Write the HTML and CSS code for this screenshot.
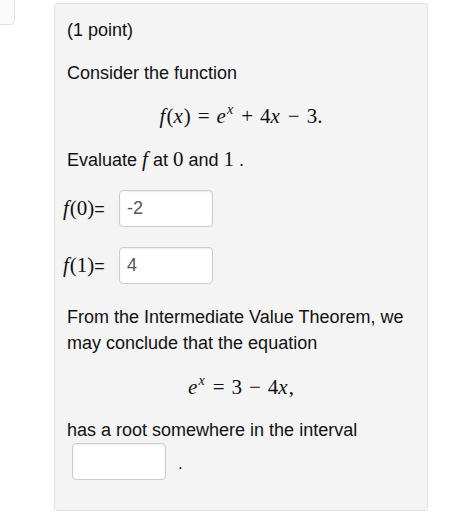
FILE: index.html
```html
<!DOCTYPE html>
<html lang='en'>
<head>
    <meta charset='UTF-8'>
    <title>Problem</title>
    <link rel="stylesheet" href="styles.css">
</head>
<body>
    <div class='page'>
        <div class='side-tab'></div>
        <div class='problem'>
            <p>(1 point)</p>
            <p>Consider the function</p>
            <div class='math-display'><i>f</i>(<i>x</i>)<span class='mo'>=</span><i>e</i><sup><i>x</i></sup><span class='mo'>+</span>4<i>x</i><span class='mo'>&minus;</span>3.</div>
            <p>Evaluate <i class='m'>f</i> at <span class='m'>0</span> and <span class='m'>1</span> .</p>
            <div class='answer-row'>
                <span class='label'><span class='m'><i>f</i>(0)</span>=</span>
                <input class='answer' type='text' value='-2'>
            </div>
            <div class='answer-row'>
                <span class='label'><span class='m'><i>f</i>(1)</span>=</span>
                <input class='answer' type='text' value='4'>
            </div>
            <p class='tight'>From the Intermediate Value Theorem, we may conclude that the equation</p>
            <div class='math-display'><i>e</i><sup><i>x</i></sup><span class='mo'>=</span>3<span class='mo'>&minus;</span>4<i>x</i>,</div>
            <p class='tight'>has a root somewhere in the interval</p>
            <div class='interval-row'>
                <input class='answer' type='text' value=''>
                <span class='dot'>.</span>
            </div>
        </div>
    </div>
</body>
</html>
```

FILE: styles.css
```css
* {
    margin: 0;
    padding: 0;
    box-sizing: border-box;
}

html, body {
    height: 100%;
    background-color: white;
}

body {
    font-family: "Liberation Sans", Arial, sans-serif;
    font-size: 18px;
    color: #111;
}

.page {
    display: flex;
    align-items: flex-start;
}

.side-tab {
    width: 15px;
    height: 25px;
    border: 1px solid #e2e2e2;
    border-left: none;
    border-top: none;
    border-bottom-right-radius: 5px;
    background-color: #fbfbfb;
}

.problem {
    margin: 3px 0 0 39px;
    width: 374px;
    height: 508px;
    background-color: #f4f4f4;
    border: 1px solid #e4e4e4;
    border-radius: 3px;
    padding: 13px 12px 0 12px;
}

.problem p {
    line-height: 26px;
    margin-bottom: 17px;
}

.problem p.tight {
    margin-bottom: 18px;
}

.m, .math-display {
    font-family: "Liberation Serif", "Times New Roman", serif;
    font-size: 21px;
}

.m i, .math-display i {
    letter-spacing: 1px;
}

.math-display {
    text-align: center;
    line-height: 26px;
    margin-bottom: 17px;
}

.mo {
    margin: 0 7px;
}

.math-display sup {
    font-size: 14px;
    vertical-align: 9px;
    line-height: 0;
}

.answer-row {
    display: flex;
    align-items: center;
    margin-bottom: 20px;
}

.label {
    margin-left: -4px;
    width: 56px;
    white-space: nowrap;
}

.answer {
    width: 94px;
    height: 37px;
    border: 1px solid #cccccc;
    border-radius: 4px;
    background-color: white;
    box-shadow: inset 0 1px 2px rgba(0, 0, 0, 0.08);
    font-family: "Liberation Sans", Arial, sans-serif;
    font-size: 18px;
    color: #555;
    padding-left: 7px;
}

.interval-row {
    display: flex;
    align-items: center;
    margin-top: -18px;
    padding-left: 5px;
}

.dot {
    margin-left: 12px;
    font-size: 17px;
    position: relative;
    top: 2px;
}
```
